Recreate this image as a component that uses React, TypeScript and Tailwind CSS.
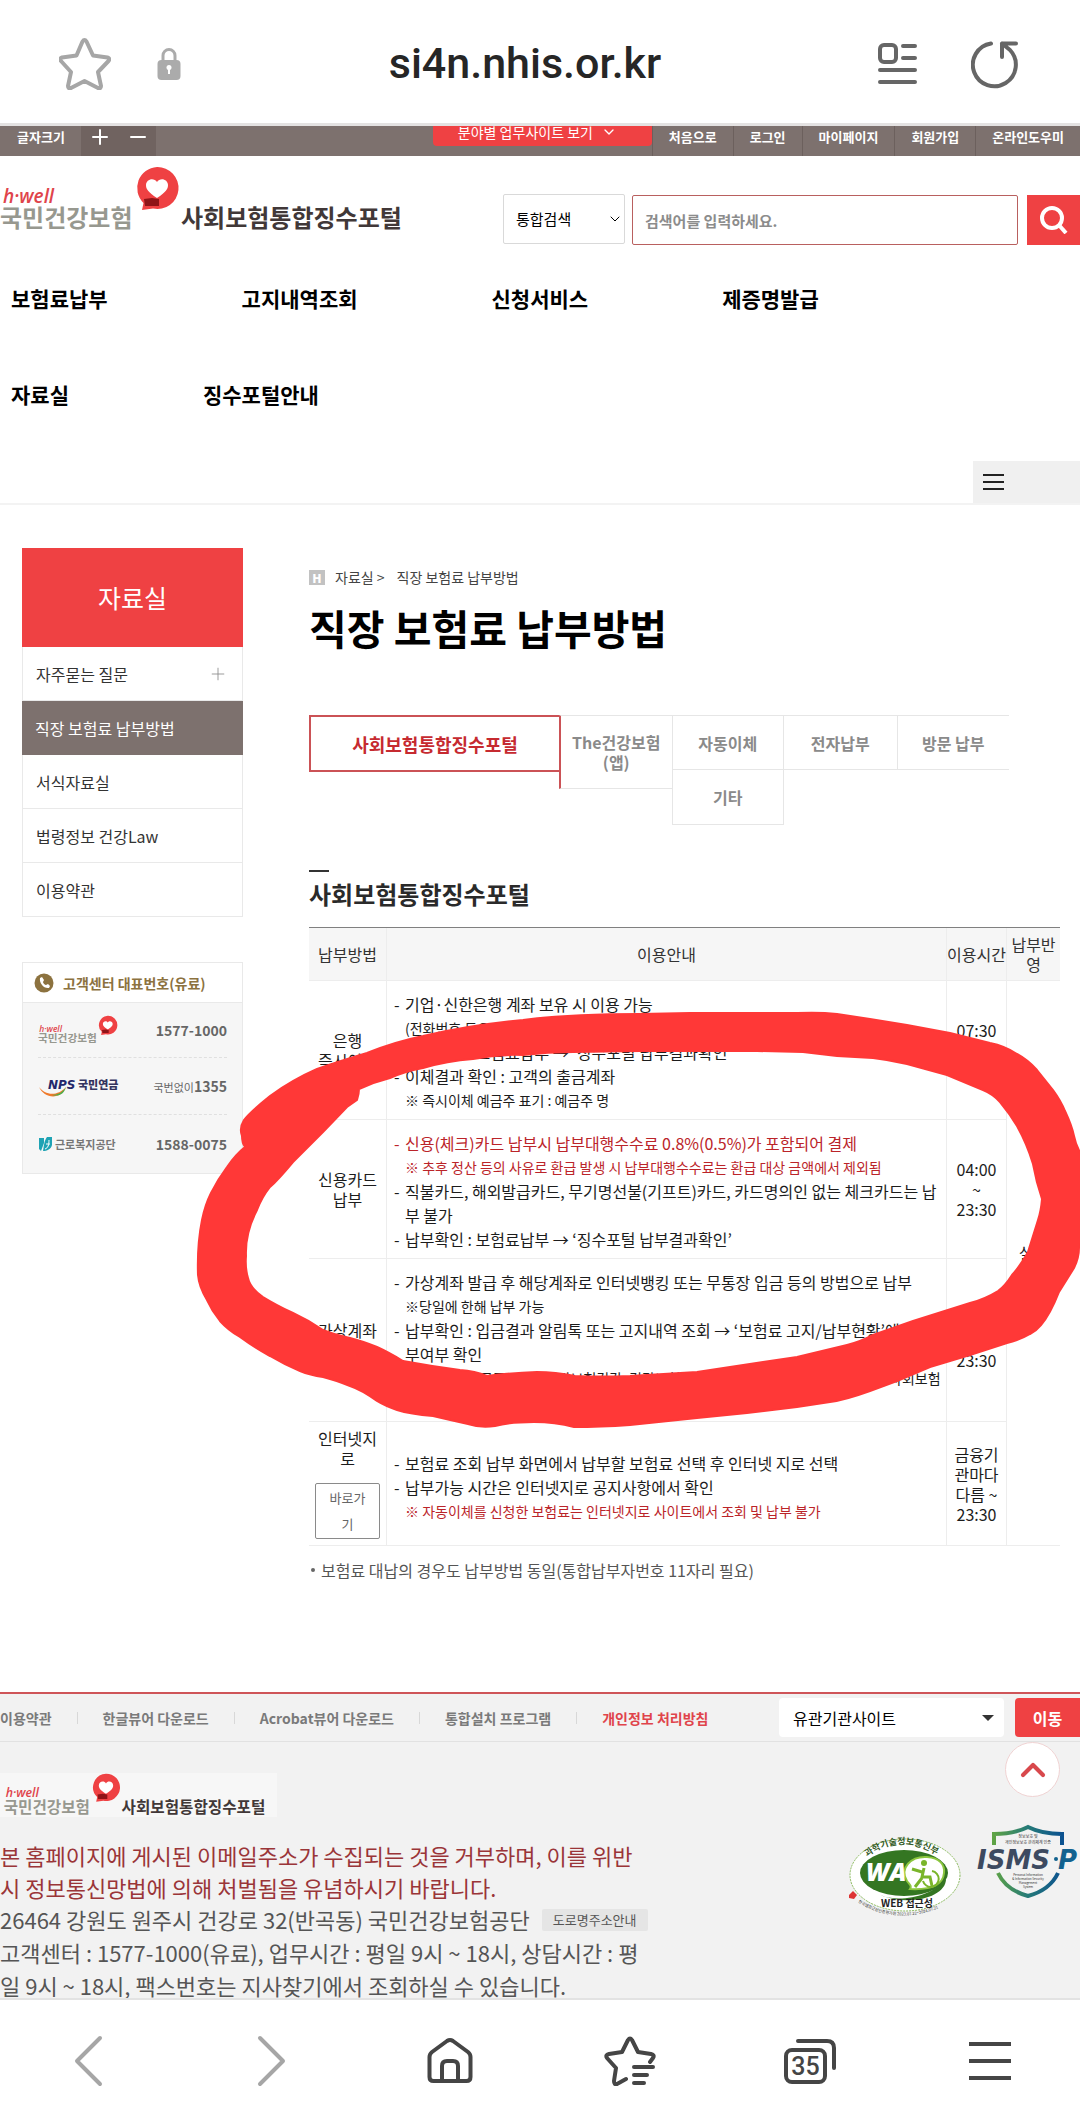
import clsx from "clsx";
import { ChevronDown, ChevronUp, Plus, Minus } from "lucide-react";

const utilLinks = ["처음으로", "로그인", "마이페이지", "회원가입", "온라인도우미"];

const mainMenu = [
  "보험료납부",
  "고지내역조회",
  "신청서비스",
  "제증명발급",
  "자료실",
  "징수포털안내",
];

const sideMenu = [
  { label: "자주묻는 질문", expandable: true },
  { label: "직장 보험료 납부방법", active: true },
  { label: "서식자료실" },
  { label: "법령정보 건강Law" },
  { label: "이용약관" },
];

const footerLinks = [
  { label: "이용약관" },
  { label: "한글뷰어 다운로드" },
  { label: "Acrobat뷰어 다운로드" },
  { label: "통합설치 프로그램" },
  { label: "개인정보 처리방침", strong: true },
];

function Logo({ compact, className }: { compact?: boolean; className?: string }) {
  return (
    <svg
      viewBox={compact ? "0 0 180 66" : "0 0 400 66"}
      className={clsx("overflow-visible", className)}
      role="img"
      aria-label="국민건강보험 사회보험통합징수포털"
    >
      <text
        x="3"
        y="37"
        fontSize="19"
        fontStyle="italic"
        fontWeight="600"
        fill="#e0444b"
        fontFamily="'Open Sans', sans-serif"
      >
        h·well
      </text>
      <text x="0" y="61" fontSize="24" fontWeight="700" fill="#97988f">
        국민건강보험
      </text>
      <path
        d="M157 1a21 21 0 1 1-4 41.500l-11 1.500 1.500-7A21 21 0 0 1 157 1z"
        fill="#ef4143"
      />
      <path
        d="M157 32c-9-6-11-9-11-13 0-6 8-8 11-3 3-5 11-3 11 3 0 4-2 7-11 13z"
        fill="#fff"
      />
      <path d="M144 33l8-1 7 1v7h-14z" fill="#8f1418" />
      {!compact && (
        <text x="181" y="61" fontSize="24" fontWeight="700" fill="#413838">
          사회보험통합징수포털
        </text>
      )}
    </svg>
  );
}

function BrowserBar() {
  return (
    <header className="flex h-[126px] shrink-0 items-center border-b-3 border-[#e4e2e2] bg-white pt-1 pr-[61px] pl-[59px]">
      <div className="flex items-center gap-[46px]">
        <button aria-label="북마크">
          <svg viewBox="0 0 52 52" className="size-[52px]" fill="none" stroke="#a6a6a6" strokeWidth="4" strokeLinejoin="round">
            <path d="M23.500 3.500q2-3 4 0L34 17.500l14.500 2q3 1 1 3.500L39 34l3 14q0 3-3 2L25.500 43 12 50q-3 1-3-2l3-14L2 23q-2-2.500 1-3.500l14.500-2z" />
          </svg>
        </button>
        <svg viewBox="0 0 24 34" className="h-[34px] w-6">
          <path d="M6 14V8.500a6 6 0 0 1 12 0V14" fill="none" stroke="#ababab" strokeWidth="3" />
          <rect x="0.500" y="13" width="23" height="20" rx="4" fill="#ababab" />
          <circle cx="12" cy="20.500" r="2.500" fill="#fff" />
          <path d="M12 21v6" stroke="#fff" strokeWidth="2" />
        </svg>
      </div>
      <p className="flex-1 pr-2 text-center font-[Roboto] text-[43px] leading-none font-medium text-[#262626]">
        si4n.nhis.or.kr
      </p>
      <div className="flex items-center gap-[54px]">
        <button aria-label="리더 모드">
          <svg viewBox="0 0 40 44" className="h-11 w-10" fill="none" stroke="#666" strokeWidth="4" strokeLinecap="round">
            <rect x="3" y="3" width="16" height="17" rx="4" />
            <path d="M26 4h12M26 16h12M3 28h35M3 40h35" />
          </svg>
        </button>
        <button aria-label="새로고침">
          <svg viewBox="0 0 48 50" className="h-[50px] w-12" fill="none" stroke="#666" strokeWidth="4" strokeLinecap="round" strokeLinejoin="round">
            <path d="M20 4.500A21.500 21.500 0 1 0 39 11L31 4.500M31 18V4.500h14" />
          </svg>
        </button>
      </div>
    </header>
  );
}

function UtilBar() {
  return (
    <div className="-mt-2 flex h-[38px] items-stretch bg-[#7d716e] text-[13px] font-bold text-white">
      <span className="flex w-[81px] items-center pl-[17px]">글자크기</span>
      <button aria-label="크게" className="grid w-[38px] place-items-center bg-[#706360]">
        <Plus className="size-6" />
      </button>
      <button aria-label="작게" className="grid w-[37px] place-items-center bg-[#706360]">
        <Minus className="size-6" />
      </button>
      <button className="ml-auto flex h-7 w-[219px] items-center gap-2 rounded-b-sm bg-[#ef4143] pl-[25px] text-sm font-normal text-white">
        분야별 업무사이트 보기
        <ChevronDown className="size-4" />
      </button>
      <nav className="flex">
        {utilLinks.map((label) => (
          <a key={label} href="#" className="flex items-center border-l border-[#6c605d] px-4">
            {label}
          </a>
        ))}
      </nav>
    </div>
  );
}

function SiteHeader() {
  return (
    <div className="border-b-2 border-[#f3f3f3]">
      <div className="flex h-[95px] items-start justify-between">
        <h1 className="pt-2.5">
          <Logo className="h-[66px] w-[400px]" />
        </h1>
        <form className="flex pt-[38px]">
          <label className="relative">
            <span className="sr-only">검색 구분</span>
            <select className="h-[50px] w-[122px] appearance-none rounded-xs border border-[#d9d9d9] bg-white pl-3 text-[15px]">
              <option>통합검색</option>
            </select>
            <ChevronDown className="pointer-events-none absolute top-[17px] right-[2px] size-4" strokeWidth={1.5} />
          </label>
          <input
            type="text"
            aria-label="검색어"
            placeholder="검색어를 입력하세요."
            className="mt-px ml-[7px] h-[50px] w-[386px] rounded-xs border border-[#b9605f] pl-3 text-[15px] font-bold placeholder:text-[#8c8c8c]"
          />
          <button aria-label="검색" className="mt-px ml-[9px] grid h-[50px] w-[53px] place-items-center bg-[#ef4143]">
            <svg viewBox="0 0 28 28" className="size-7" fill="none" stroke="#fff" strokeWidth="4">
              <circle cx="12" cy="12" r="10" />
              <path d="M18 18l8 9" />
            </svg>
          </button>
        </form>
      </div>
      <ul className="flex max-w-[960px] flex-wrap gap-x-[134px] gap-y-16 pt-[31px] pl-[11px] text-[21px] leading-8 font-bold">
        {mainMenu.map((label) => (
          <li key={label}>
            <a href="#">{label}</a>
          </li>
        ))}
      </ul>
      <div className="mt-[51px] flex justify-end">
        <button aria-label="전체메뉴" className="flex h-[42px] w-[107px] flex-col justify-center gap-[5px] bg-[#f0f0f0] pl-2.5">
          <span className="h-0.5 w-[21px] bg-[#222]" />
          <span className="h-0.5 w-[21px] bg-[#222]" />
          <span className="h-0.5 w-[21px] bg-[#222]" />
        </button>
      </div>
    </div>
  );
}

function Sidebar() {
  return (
    <aside className="w-[221px] shrink-0 pt-[43px]">
      <h2 className="grid h-[99px] place-items-center bg-[#ef4143] text-[25px] text-white">자료실</h2>
      <ul className="border-x border-[#e9e9e9]">
        {sideMenu.map((item) => (
          <li key={item.label}>
            <a
              href="#"
              className={clsx(
                "flex h-[54px] items-center justify-between border-b pr-[14px] pl-[13px]",
                item.active
                  ? "-mx-px border-[#7d716e] bg-[#7d716e] pl-3.5 text-white"
                  : "border-[#e9e9e9] text-[#333]",
              )}
            >
              {item.label}
              {item.expandable && <Plus className="size-5 text-[#888]" strokeWidth={1} />}
            </a>
          </li>
        ))}
      </ul>

      <section className="mt-[45px] border border-[#e9e9e9] bg-[#f6f6f6]">
        <h3 className="flex h-10 items-center gap-[9px] border-b border-[#e9e9e9] bg-white pl-[11px] text-sm font-bold text-[#8c723f]">
          <svg viewBox="0 0 20 20" className="size-5">
            <circle cx="10" cy="10" r="9.500" fill="#8c723f" />
            <path d="M6 5l2-1 2 3-1 2c0 1 2 3 3 3l2-1 2 2-1 2c-5 1-10-5-9-10z" fill="#fff" />
          </svg>
          고객센터 대표번호(유료)
        </h3>
        <ul className="px-[15px] text-sm font-bold text-[#666]">
          <li className="flex h-[55px] items-center justify-between border-b border-dashed border-[#e0e0e0]">
            <Logo compact className="h-[30px] w-20" />
            1577-1000
          </li>
          <li className="flex h-[57px] items-center justify-between border-b border-dashed border-[#e0e0e0]">
            <svg viewBox="0 0 80 22" className="h-[22px] w-20 overflow-visible" role="img" aria-label="NPS 국민연금">
              <path d="M1 12c6 8 18 10 27 0-6 14-22 11-27 0z" fill="#ef7a2b" />
              <path d="M14 20c6 0 11-3 14-8-2 7-7 10-14 8z" fill="#4eae4a" />
              <text x="10" y="14" fontSize="12" fontStyle="italic" fontWeight="800" fill="#23286b" fontFamily="'DejaVu Sans', sans-serif">
                NPS
              </text>
              <text x="40" y="14" fontSize="11" fontWeight="800" fill="#33345f">
                국민연금
              </text>
            </svg>
            <span>
              <span className="text-[11px] font-normal">국번없이</span>1355
            </span>
          </li>
          <li className="flex h-[58px] items-center justify-between">
            <svg viewBox="0 0 80 20" className="h-5 w-20 overflow-visible" role="img" aria-label="근로복지공단">
              <path d="M1 4h5v5l-3 8-2-2z" fill="#1fa3b4" />
              <path d="M5 17c1-5 1-10 4-14h5v8c-1 4-5 6-9 6z" fill="#1fa3b4" />
              <path d="M7 15c3-1 4-4 4-9M8 10h4" fill="none" stroke="#fff" />
              <text x="17" y="15" fontSize="11" fontWeight="700" fill="#777">
                근로복지공단
              </text>
            </svg>
            1588-0075
          </li>
        </ul>
      </section>
    </aside>
  );
}

function Tabs() {
  const tab = "grid h-[55px] place-items-center border-[#e6e6e6]";
  return (
    <ul className="mt-[60px] flex h-[110px] items-start pr-[51px] leading-5 font-bold text-[#8a8a8a]">
      <li className="w-[250px] shrink-0">
        <a href="#" className="grid h-[57px] place-items-center border-2 border-r-0 border-[#cb5256] text-lg leading-6 font-bold text-[#c62a30]">
          사회보험통합징수포털
        </a>
      </li>
      <li className="flex-1">
        <a href="#" className="block h-[74px] border-y border-l-2 border-y-[#e6e6e6] border-l-[#cb5256] pt-4 text-center">
          The건강보험
          <br />
          (앱)
        </a>
      </li>
      <li className="flex-1">
        <a href="#" className={clsx(tab, "border")}>자동이체</a>
        <a href="#" className={clsx(tab, "border border-t-0")}>기타</a>
      </li>
      <li className="flex-1">
        <a href="#" className={clsx(tab, "border-y")}>전자납부</a>
      </li>
      <li className="flex-1">
        <a href="#" className={clsx(tab, "border-y border-l")}>방문 납부</a>
      </li>
    </ul>
  );
}

type Line = { text: string; note?: boolean; red?: boolean };

function Guide({ lines }: { lines: Line[] }) {
  return (
    <ul className="leading-6">
      {lines.map((line) => (
        <li
          key={line.text}
          className={clsx("flex", line.note && "text-sm leading-6", line.red ? "text-[#bb2429]" : "text-[#1c1c1c]")}
        >
          <span className="w-[11px] shrink-0">{!line.note && "-"}</span>
          <span>{line.text}</span>
        </li>
      ))}
    </ul>
  );
}

const rows: { method: string[]; time: string; lines: Line[] }[] = [
  {
    method: ["은행", "즉시이체"],
    time: "07:30 ~ 23:30",
    lines: [
      { text: "기업·신한은행 계좌 보유 시 이용 가능" },
      { text: "(전화번호 등으로 본인인증 후 이용)", note: true },
      { text: "납부확인 : 보험료납부 → ‘징수포털 납부결과확인" },
      { text: "이체결과 확인 : 고객의 출금계좌" },
      { text: "※ 즉시이체 예금주 표기 : 예금주 명", note: true },
    ],
  },
  {
    method: ["신용카드", "납부"],
    time: "04:00 ~ 23:30",
    lines: [
      { text: "신용(체크)카드 납부시 납부대행수수료 0.8%(0.5%)가 포함되어 결제", red: true },
      { text: "※ 추후 정산 등의 사유로 환급 발생 시 납부대행수수료는 환급 대상 금액에서 제외됨", note: true, red: true },
      { text: "직불카드, 해외발급카드, 무기명선불(기프트)카드, 카드명의인 없는 체크카드는 납부 불가" },
      { text: "납부확인 : 보험료납부 → ‘징수포털 납부결과확인’" },
    ],
  },
  {
    method: ["가상계좌", "납부"],
    time: "04:00 ~ 23:30",
    lines: [
      { text: "가상계좌 발급 후 해당계좌로 인터넷뱅킹 또는 무통장 입금 등의 방법으로 납부" },
      { text: "※당일에 한해 납부 가능", note: true },
      { text: "납부확인 : 입금결과 알림톡 또는 고지내역 조회 → ‘보험료 고지/납부현황’에서 납부여부 확인" },
      { text: "※ 입금 시 예금주 표기 : 건강보험건강, 건강보험장기, 국민연금, 고용보험, 산재보험, 사회보험통합징수", note: true },
    ],
  },
];

function GuideTable() {
  const cell = "border-r border-b border-[#ededed]";
  return (
    <table className="mt-[17px] w-full table-fixed border-separate border-spacing-0 border-t border-[#808080] text-center leading-5 text-[#1c1c1c]">
      <colgroup>
        <col className="w-[78px]" />
        <col />
        <col className="w-[60px]" />
        <col className="w-[53px]" />
      </colgroup>
      <thead className="bg-[#f6f6f6] text-[#333]">
        <tr className="h-[53px]">
          <th className={clsx(cell, "font-normal")}>납부방법</th>
          <th className={clsx(cell, "font-normal")}>이용안내</th>
          <th className={clsx(cell, "font-normal whitespace-nowrap")}>이용시간</th>
          <th className="border-b border-[#ededed] font-normal">납부반영</th>
        </tr>
      </thead>
      <tbody>
        {rows.map((row, i) => (
          <tr key={row.method[0]}>
            <td className={cell}>
              {row.method[0]}
              <br />
              {row.method[1]}
            </td>
            <td className={clsx(cell, "pt-[11px] pr-1 pb-[7px] pl-[7px] text-left")}>
              <Guide lines={row.lines} />
            </td>
            <td className={clsx(cell, "px-1.5")}>{row.time}</td>
            {i === 0 && (
              <td rowSpan={4} className="border-b border-[#ededed]">
                실시
                <br />간
              </td>
            )}
          </tr>
        ))}
        <tr>
          <td className={clsx(cell, "px-1.5 py-1.5")}>
            인터넷지로
            <button className="mt-[15px] block h-14 w-full rounded-xs border border-[#8a8a8a] px-3 text-[13px] leading-[26px] text-[#666]">
              바로가기
            </button>
          </td>
          <td className={clsx(cell, "pt-1.5 pr-1 pl-[7px] text-left")}>
            <Guide
              lines={[
                { text: "보험료 조회 납부 화면에서 납부할 보험료 선택 후 인터넷 지로 선택" },
                { text: "납부가능 시간은 인터넷지로 공지사항에서 확인" },
                { text: "※ 자동이체를 신청한 보험료는 인터넷지로 사이트에서 조회 및 납부 불가", note: true, red: true },
              ]}
            />
          </td>
          <td className={clsx(cell, "px-1.5")}>금융기관마다 다름 ~ 23:30</td>
        </tr>
      </tbody>
    </table>
  );
}

// hand-drawn marker ring around the credit card row
function MarkerRing() {
  return (
    <svg
      viewBox="196 1010 884 420"
      className="pointer-events-none absolute top-[505px] left-[196px] h-[420px] w-[884px]"
      aria-hidden="true"
    >
      <path
        fill="#ff3837"
        stroke="#ff3837"
        strokeWidth="2"
        strokeLinejoin="round"
        fillRule="evenodd"
        d="M242 1136Q239 1128 244 1120Q250 1112 270 1096Q292 1080 317 1069Q340 1061 367 1053Q394 1042 423 1036Q470 1025 523 1020Q570 1014 640 1014L690 1013L797 1013Q820 1012 837 1014L870 1019L907 1025L950 1033L990 1043Q1005 1046 1017 1054Q1028 1060 1037 1070L1053 1090Q1061 1101 1065 1111Q1072 1126 1074 1136Q1076 1146 1081 1154L1090 1180L1090 1225L1079 1248Q1079 1258 1074 1268L1059 1292Q1050 1315 1041 1325Q1036 1331 1030 1334Q1020 1340 1007 1343L970 1355L930 1367L897 1381L870 1391Q845 1400 830 1402L797 1407L747 1413L697 1418L630 1425Q600 1427 574 1427Q555 1422 534 1422Q510 1422 495 1426Q480 1428 468 1424Q450 1420 433 1416Q410 1414 397 1410Q385 1406 377 1401Q362 1390 350 1386Q335 1380 323 1377Q310 1375 300 1371Q285 1365 270 1356Q255 1348 240 1337Q228 1330 220 1321Q212 1311 207 1300Q199 1287 198 1275Q197 1245 202 1220Q205 1205 211 1193Q218 1179 227 1167Q236 1154 245 1147Q242 1143 242 1136Z
           M359 1089Q374 1082 390 1078Q406 1071 423 1068Q447 1061 473 1059Q498 1054 523 1055Q548 1052 573 1052L640 1051L757 1051L803 1052L837 1056L873 1058Q890 1060 907 1064L947 1075L983 1090Q993 1094 1000 1102Q1010 1114 1017 1126Q1027 1144 1033 1164Q1036 1181 1042 1199Q1041 1211 1038 1220L1028 1252Q1021 1265 1012 1275Q1005 1286 998 1291Q985 1299 970 1303L913 1321L873 1335Q860 1342 847 1345L797 1357L763 1362L697 1372L630 1376Q600 1377 575 1376Q555 1372 537 1372Q510 1373 487 1376Q475 1371 460 1370Q430 1366 403 1361Q388 1352 377 1347Q362 1341 350 1338Q335 1335 323 1330Q308 1320 293 1313Q276 1305 263 1297Q250 1288 248 1278Q245 1268 246 1256Q245 1233 257 1210Q262 1197 270 1187Q278 1180 293 1162L323 1132L347 1107L357 1100Q359 1094 359 1089Z"
      />
    </svg>
  );
}

function WebMark() {
  return (
    <svg viewBox="0 0 114 80" className="mt-3.5 h-20 w-[114px] overflow-visible" role="img" aria-label="WEB 접근성">
      <ellipse cx="57" cy="38" rx="55" ry="36" fill="#fff" stroke="#8aba5c" strokeDasharray="2 1" />
      <path id="wa-top" d="M19 20Q57-8 100 26" fill="none" />
      <path id="wa-bottom" d="M5 62Q54 96 112 60" fill="none" />
      <text fontSize="9" fontWeight="700" fill="#335b26">
        <textPath href="#wa-top">과학기술정보통신부</textPath>
      </text>
      <path d="M32 58c18 8 52 2 66-16 0 18-36 28-66 16z" fill="#347622" />
      <ellipse cx="56" cy="36" rx="44" ry="23" fill="#347622" />
      <path d="M59 44c-8-13 4-25 20-24 13 1 18 8 17 16-1 12-14 17-34 16 2-3 0-4-3-8z" fill="#fff" stroke="#8cc63f" strokeWidth="2" />
      <text x="18" y="44" fontSize="25" fontStyle="italic" fontWeight="800" fill="#fff" fontFamily="'Open Sans', sans-serif">
        WA
      </text>
      <g fill="none" stroke="#7ab52a" strokeWidth="3">
        <path d="M84 34a8 8 0 1 1-9 10" strokeWidth="2" />
        <path d="M76 31l-2 9h8l2 9M64 32l10 3M74 41l-7 9" />
      </g>
      <circle cx="76" cy="26" r="3" fill="#7ab52a" />
      <text x="33" y="70" fontSize="10" fontWeight="700" fill="#222">
        WEB 접근성
      </text>
      <path d="M1 58l4-4 4 4-3 4-5-1z" fill="#dd3434" />
      <text fontSize="4" fill="#333">
        <textPath href="#wa-bottom" startOffset="6">한국웹접근성인증평가원 2023.07.22~2024.07.21</textPath>
      </text>
    </svg>
  );
}

function IsmsMark() {
  return (
    <svg viewBox="0 0 104 76" className="h-[76px] w-[104px] overflow-visible" role="img" aria-label="ISMS-P">
      <defs>
        <linearGradient id="shield" x1="0" x2="1">
          <stop offset="0" stopColor="#5fa345" />
          <stop offset="0.5" stopColor="#257a78" />
          <stop offset="1" stopColor="#0c5290" />
        </linearGradient>
      </defs>
      <path
        d="M18 22V11Q38 11 52 4 66 11 86 11V22M22 50Q30 67 52 73 74 67 82 50"
        fill="none"
        stroke="url(#shield)"
        strokeWidth="4"
      />
      <g fill="#333" textAnchor="middle">
        <text x="52" y="15" fontSize="4">정보보호 및</text>
        <text x="52" y="21" fontSize="4">개인정보보호 관리체계 인증</text>
        <text x="52" y="53" fontSize="3">Personal Information</text>
        <text x="52" y="57" fontSize="3">&amp; Information Security</text>
        <text x="52" y="61" fontSize="3">Management</text>
        <text x="52" y="65" fontSize="3">System</text>
      </g>
      <g fontSize="26" fontStyle="italic" fontWeight="700" fontFamily="'DejaVu Sans', sans-serif">
        <text x="1" y="46" fill="#3d4a60">ISMS</text>
        <text x="82" y="46" fill="#12628f">P</text>
      </g>
      <circle cx="80" cy="36" r="2" fill="#12628f" />
    </svg>
  );
}

function Footer() {
  return (
    <footer className="relative border-t-2 border-[#cf5559] bg-[#f2f2f2]">
      <div className="flex h-12 items-center justify-between border-b border-[#e2e2e2]">
        <ul className="flex items-center text-sm font-bold text-[#7a7a7a]">
          {footerLinks.map((link, i) => (
            <li key={link.label} className="flex items-center">
              {i > 0 && <span className="mx-[25px] h-3 w-px bg-[#d8d8d8]" />}
              <a href="#" className={clsx(link.strong && "text-[#e0444b]")}>
                {link.label}
              </a>
            </li>
          ))}
        </ul>
        <form className="flex">
          <label className="relative">
            <span className="sr-only">유관기관사이트</span>
            <select className="h-[39px] w-[225px] appearance-none rounded-sm bg-white pl-3.5">
              <option>유관기관사이트</option>
            </select>
            <svg viewBox="0 0 12 6" className="pointer-events-none absolute top-[17px] right-2.5 h-1.5 w-3">
              <path d="M0 0h12L6 6z" fill="#333" />
            </svg>
          </label>
          <button className="ml-[11px] h-[39px] w-[65px] rounded-l-sm bg-[#ef4143] font-bold text-white">이동</button>
        </form>
      </div>
      <button
        aria-label="맨 위로"
        className="absolute top-12 right-5 grid size-[55px] place-items-center rounded-full border border-[#f0d3d3] bg-white text-[#d8484c]"
      >
        <ChevronUp className="size-10" strokeWidth={2.5} />
      </button>
      <div className="flex justify-between pt-[31px]">
        <div className="w-[650px]">
          <div className="w-[277px] bg-[#f7f7f7] pb-px pl-[3px]">
            <Logo className="h-[43px] w-[262px]" />
          </div>
          <address className="mt-[22px] text-[22px] leading-8 text-[#555] not-italic">
            <p className="text-[#9a3538]">
              본 홈페이지에 게시된 이메일주소가 수집되는 것을 거부하며, 이를 위반시 정보통신망법에 의해 처벌됨을 유념하시기 바랍니다.
            </p>
            <p className="flex items-center gap-3 leading-[33px]">
              26464 강원도 원주시 건강로 32(반곡동) 국민건강보험공단
              <a href="#" className="rounded-xs bg-[#e5e5e5] px-[11px] text-[13px] leading-[22px]">
                도로명주소안내
              </a>
            </p>
            <p className="leading-[33px]">
              고객센터 : 1577-1000(유료), 업무시간 : 평일 9시 ~ 18시, 상담시간 : 평일 9시 ~ 18시, 팩스번호는 지사찾기에서 조회하실 수 있습니다.
            </p>
          </address>
        </div>
        <div className="flex items-start gap-3.5 pt-[50px]">
          <WebMark />
          <IsmsMark />
        </div>
      </div>
    </footer>
  );
}

function BottomNav() {
  return (
    <nav className="grid h-[124px] shrink-0 grid-cols-6 place-items-center border-t-2 border-[#e3e3e3] bg-white">
      <button aria-label="뒤로">
        <svg viewBox="0 0 32 52" className="h-[52px] w-8" fill="none" stroke="#a6a6a6" strokeWidth="4" strokeLinecap="round" strokeLinejoin="round">
          <path d="M26 3L3 26l23 23" />
        </svg>
      </button>
      <button aria-label="앞으로">
        <svg viewBox="0 0 32 52" className="h-[52px] w-8" fill="none" stroke="#a6a6a6" strokeWidth="4" strokeLinecap="round" strokeLinejoin="round">
          <path d="M6 3l23 23L6 49" />
        </svg>
      </button>
      <button aria-label="홈">
        <svg viewBox="0 0 46 48" className="h-12 w-[46px]" fill="none" stroke="#454545" strokeWidth="4" strokeLinejoin="round">
          <path d="M2.500 20Q2.500 17 5 15L20 4q3-2 6 0l15 11q2.500 2 2.500 5v20q0 4-4 4H6.500q-4 0-4-4z" />
          <path d="M15 44V29q0-5 5-5h6q5 0 5 5v15" />
        </svg>
      </button>
      <button aria-label="북마크 목록">
        <svg viewBox="0 0 52 50" className="h-[50px] w-[52px]" fill="none" stroke="#454545" strokeWidth="4" strokeLinecap="round" strokeLinejoin="round">
          <path d="M46 26l3-4q2-3-2-4l-13-2-6-12q-2-3-4 0l-6 12-13 2q-4 1-2 4l9 10-2 13q0 4 3 3l9-5" />
          <path d="M30 31h19M30 39h13M30 47h10" />
        </svg>
      </button>
      <button aria-label="탭 35개">
        <svg viewBox="0 0 52 48" className="h-12 w-[52px]" fill="none" stroke="#454545" strokeWidth="4" strokeLinecap="round">
          <rect x="2" y="13" width="39" height="32" rx="6" />
          <path d="M14 4h29q7 0 7 7v20" />
          <text x="21.500" y="38" fontSize="25" fontWeight="500" textAnchor="middle" fill="#454545" stroke="none" fontFamily="Roboto, sans-serif">
            35
          </text>
        </svg>
      </button>
      <button aria-label="메뉴">
        <svg viewBox="0 0 42 40" className="h-10 w-[42px]" stroke="#454545" strokeWidth="4">
          <path d="M0 3h42M0 20h42M0 37h42" />
        </svg>
      </button>
    </nav>
  );
}

export default function App() {
  return (
    <div className="flex h-screen flex-col bg-white font-['Noto_Sans_CJK_KR',sans-serif] text-base text-black">
      <BrowserBar />
      <div className="min-h-0 flex-1 overflow-hidden">
        <UtilBar />
        <SiteHeader />
        <div className="relative flex gap-[66px] overflow-hidden pr-5 pl-[22px]">
          <Sidebar />
          <main className="min-w-0 flex-1 pt-[62px] pb-[110px]">
            <p className="flex items-center text-sm leading-5 text-[#444]">
              <span className="mr-2.5 grid h-[15px] w-4 place-items-center bg-[#c2c2c2] text-xs font-black text-white">H</span>
              <a href="#">자료실 &gt;</a>
              <span className="ml-3">직장 보험료 납부방법</span>
            </p>
            <h2 className="mt-3 text-[41px] leading-14 font-bold">직장 보험료 납부방법</h2>
            <Tabs />
            <div className="mt-[45px] h-0.5 w-5 bg-[#333]" />
            <h3 className="mt-1.5 text-2xl leading-8 font-bold text-[#2a2a2a]">사회보험통합징수포털</h3>
            <GuideTable />
            <p className="mt-3 flex items-center gap-1.5 pl-0.5 leading-6 text-[#555]">
              <span className="size-1 rounded-full bg-[#666]" />
              보험료 대납의 경우도 납부방법 동일(통합납부자번호 11자리 필요)
            </p>
          </main>
          <MarkerRing />
        </div>
        <Footer />
      </div>
      <BottomNav />
    </div>
  );
}
